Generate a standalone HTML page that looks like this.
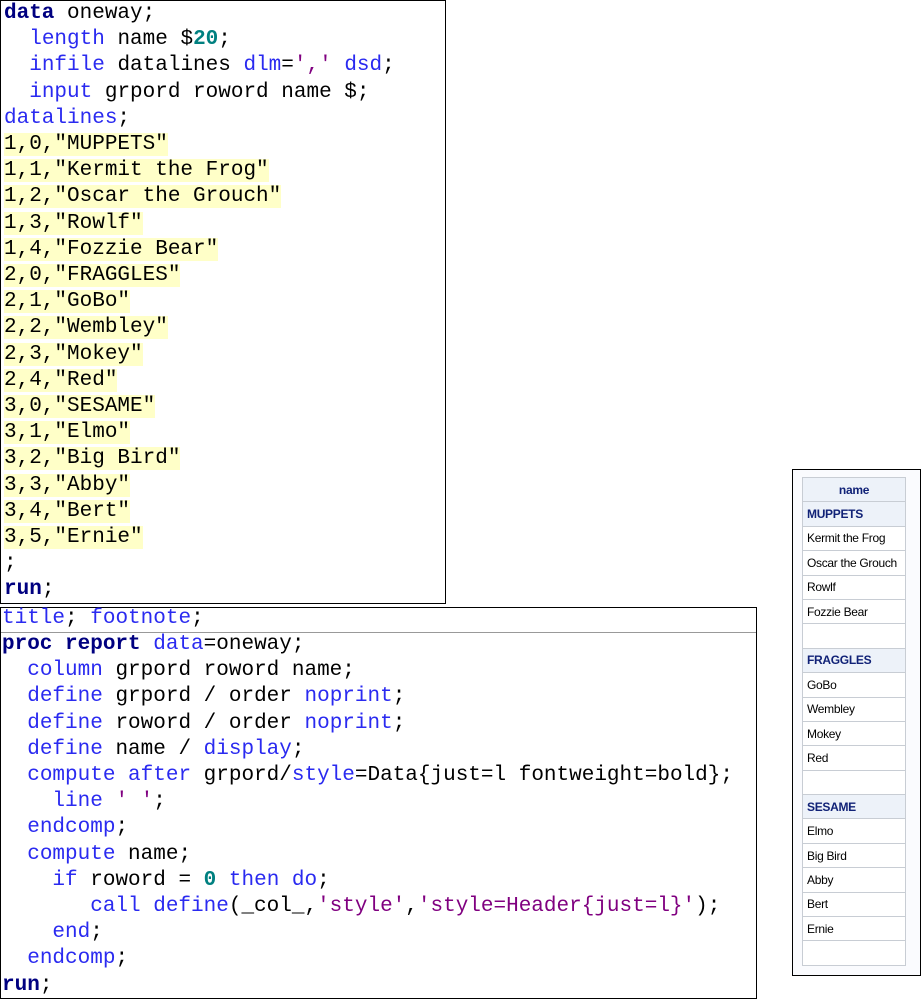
<!DOCTYPE html>
<html><head><meta charset="utf-8"><style>
body{margin:0;width:921px;height:999px;background:#fff;position:relative;overflow:hidden;font-family:"Liberation Mono",monospace;}
.box{position:absolute;border:1px solid #000;box-sizing:border-box;}
.code{position:absolute;font-size:21px;line-height:26.2px;white-space:pre;color:#000;}
.k{color:#000080;font-weight:bold}
.b{color:#2a2af0}
.n{color:#008080;font-weight:bold}
.s{color:#800080}
.h{background:#ffffc8}
table{position:absolute;left:802px;top:477px;width:104px;border-collapse:collapse;font-family:"Liberation Sans",sans-serif;font-size:12px;}
td{border:1px solid #c8cdd4;height:24.4px;padding:0 0 0 4px;box-sizing:border-box;white-space:nowrap;letter-spacing:-0.3px;background:#fff}
td.hd{background:#edf2f9;color:#112277;font-weight:bold;}
td.c{text-align:center;padding:0}
</style></head><body>
<div class="box" style="left:0;top:0;width:446px;height:604px"></div>
<div class="code" style="left:4px;top:1px"><span class="k">data</span> oneway;
  <span class="b">length</span> name $<span class="n">20</span>;
  <span class="b">infile</span> datalines <span class="b">dlm</span>=<span class="s">','</span> <span class="b">dsd</span>;
  <span class="b">input</span> grpord roword name $;
<span class="b">datalines</span>;
<span class="h">1,0,"MUPPETS"</span>
<span class="h">1,1,"Kermit the Frog"</span>
<span class="h">1,2,"Oscar the Grouch"</span>
<span class="h">1,3,"Rowlf"</span>
<span class="h">1,4,"Fozzie Bear"</span>
<span class="h">2,0,"FRAGGLES"</span>
<span class="h">2,1,"GoBo"</span>
<span class="h">2,2,"Wembley"</span>
<span class="h">2,3,"Mokey"</span>
<span class="h">2,4,"Red"</span>
<span class="h">3,0,"SESAME"</span>
<span class="h">3,1,"Elmo"</span>
<span class="h">3,2,"Big Bird"</span>
<span class="h">3,3,"Abby"</span>
<span class="h">3,4,"Bert"</span>
<span class="h">3,5,"Ernie"</span>
;
<span class="k">run</span>;</div>
<div class="box" style="left:0;top:607px;width:757px;height:392px"></div>
<div style="position:absolute;left:1px;top:632px;width:755px;height:1px;background:#999"></div>
<div class="code" style="left:2px;top:606px"><span class="b">title</span>; <span class="b">footnote</span>;</div>
<div class="code" style="left:2px;top:632px"><span class="k">proc report</span> <span class="b">data</span>=oneway;
  <span class="b">column</span> grpord roword name;
  <span class="b">define</span> grpord / order <span class="b">noprint</span>;
  <span class="b">define</span> roword / order <span class="b">noprint</span>;
  <span class="b">define</span> name / <span class="b">display</span>;
  <span class="b">compute after</span> grpord/<span class="b">style</span>=Data{just=l fontweight=bold};
    <span class="b">line</span> <span class="s">' '</span>;
  <span class="b">endcomp</span>;
  <span class="b">compute</span> name;
    <span class="b">if</span> roword = <span class="n">0</span> <span class="b">then do</span>;
       <span class="b">call define</span>(_col_,<span class="s">'style'</span>,<span class="s">'style=Header{just=l}'</span>);
    <span class="b">end</span>;
  <span class="b">endcomp</span>;
<span class="k">run</span>;</div>
<div class="box" style="left:792px;top:469px;width:129px;height:507px;background:#fafbfe"></div>
<table>
<tr><td class="hd c">name</td></tr>
<tr><td class="hd">MUPPETS</td></tr>
<tr><td>Kermit the Frog</td></tr>
<tr><td>Oscar the Grouch</td></tr>
<tr><td>Rowlf</td></tr>
<tr><td>Fozzie Bear</td></tr>
<tr><td></td></tr>
<tr><td class="hd">FRAGGLES</td></tr>
<tr><td>GoBo</td></tr>
<tr><td>Wembley</td></tr>
<tr><td>Mokey</td></tr>
<tr><td>Red</td></tr>
<tr><td></td></tr>
<tr><td class="hd">SESAME</td></tr>
<tr><td>Elmo</td></tr>
<tr><td>Big Bird</td></tr>
<tr><td>Abby</td></tr>
<tr><td>Bert</td></tr>
<tr><td>Ernie</td></tr>
<tr><td></td></tr>
</table>
</body></html>
